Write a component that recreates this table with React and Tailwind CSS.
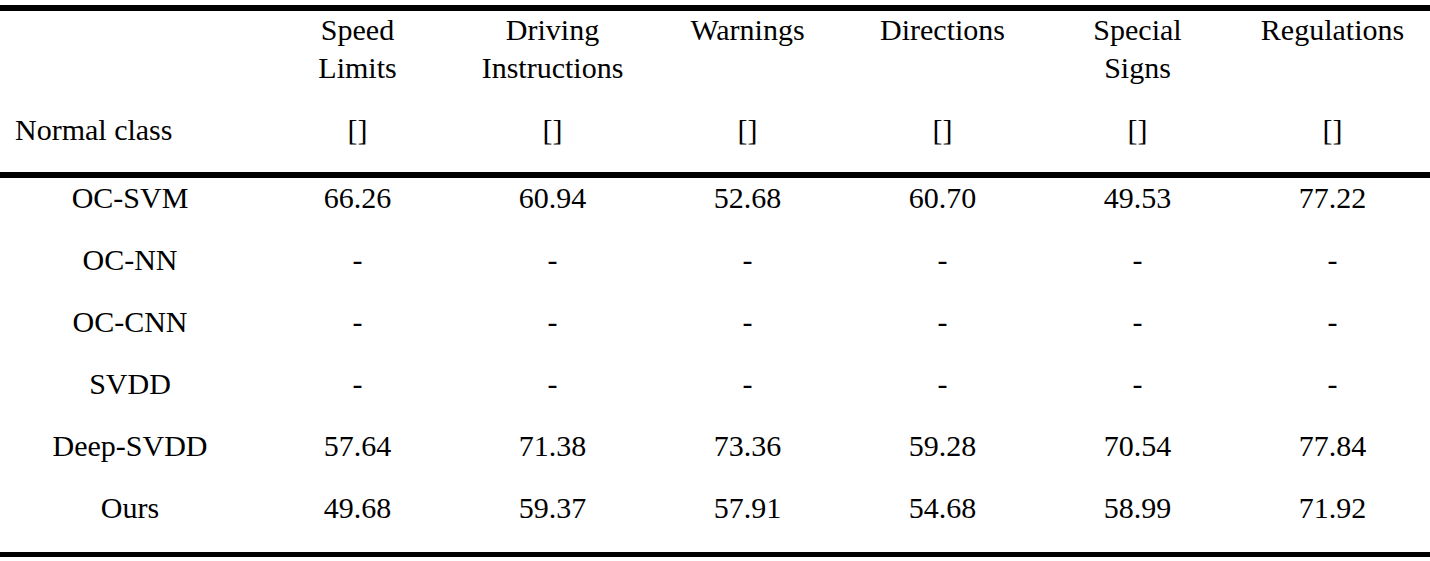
import React from 'react';

const columns = [
  ['Speed', 'Limits'],
  ['Driving', 'Instructions'],
  ['Warnings'],
  ['Directions'],
  ['Special', 'Signs'],
  ['Regulations']
];

const rows = [
  { name: 'OC-SVM', values: ['66.26', '60.94', '52.68', '60.70', '49.53', '77.22'] },
  { name: 'OC-NN', values: ['-', '-', '-', '-', '-', '-'] },
  { name: 'OC-CNN', values: ['-', '-', '-', '-', '-', '-'] },
  { name: 'SVDD', values: ['-', '-', '-', '-', '-', '-'] },
  { name: 'Deep-SVDD', values: ['57.64', '71.38', '73.36', '59.28', '70.54', '77.84'] },
  { name: 'Ours', values: ['49.68', '59.37', '57.91', '54.68', '58.99', '71.92'] }
];

const grid = 'grid grid-cols-[260px_repeat(6,195px)]';

function App() {
  return (
    <div className="min-h-screen bg-white pt-[5px] text-black text-[30px] leading-[36px] font-['Liberation_Serif','Times_New_Roman',serif]">
      <div className="border-t-[6px] border-b-[5px] border-black pb-[2px]">
        {/* Header */}
        <div className="border-b-[6px] border-black">
          <div className={`${grid} h-[101px] leading-[38px]`}>
            <div />
            {columns.map((lines, i) => (
              <div key={i} className="text-center">
                {lines.map((l) => (
                  <div key={l}>{l}</div>
                ))}
              </div>
            ))}
          </div>
          <div className={`${grid} pb-[24px]`}>
            <div className="pl-[15px]">Normal class</div>
            {columns.map((_, i) => (
              <div key={i} className="text-center">[]</div>
            ))}
          </div>
        </div>

        {/* Body */}
        {rows.map((row) => (
          <div key={row.name} className={`${grid} h-[62px] pt-[2px]`}>
            <div className="text-center">{row.name}</div>
            {row.values.map((v, i) => (
              <div key={i} className="text-center">{v}</div>
            ))}
          </div>
        ))}
      </div>
    </div>
  );
}

export default App;
